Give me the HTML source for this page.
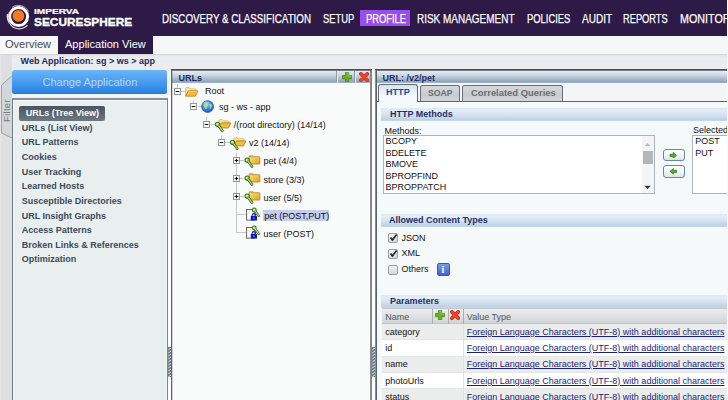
<!DOCTYPE html>
<html>
<head>
<meta charset="utf-8">
<title>SecureSphere</title>
<style>
*{box-sizing:border-box;margin:0;padding:0}
html,body{width:728px;height:400px;overflow:hidden;background:#f3f4f5;font-family:"Liberation Sans",Arial,sans-serif;font-size:9px;color:#111}
.a{position:absolute}
.t{position:absolute;white-space:nowrap;line-height:10px;height:10px;font-size:9px;transform-origin:0 0}
.b{font-weight:bold}
#hdr{position:absolute;left:0;top:0;width:728px;height:35.6px;background:#2e1a47}
.nav{position:absolute;top:12px;height:15px;line-height:15px;font-size:12.5px;color:#fff;-webkit-text-stroke:0.25px #fff;white-space:nowrap;transform-origin:0 0}
#tabs{position:absolute;left:0;top:35.6px;width:728px;height:19.4px;background:#f5f6f6;border-bottom:1px solid #d2d5d7}
.tb{position:absolute;top:0;height:18.6px}
.tb span{position:absolute;top:1.1px;line-height:14px;font-size:11.5px;white-space:nowrap;transform-origin:0 0;transform:scaleX(.96)}
#strip{position:absolute;left:0;top:55px;width:12px;height:345px;background:linear-gradient(90deg,#e6e7e8,#dcdedf 2px,#dcdedf 9px,#dfe2e6)}
#crow{position:absolute;left:0;top:55px;width:728px;height:14.5px;background:linear-gradient(#e4e6e7,#ebeced 3px)}
#chg{position:absolute;left:12px;top:69.5px;width:155px;height:24.5px;border-radius:2.5px;background:linear-gradient(#6ab6f6,#4a9df0 45%,#2f86e4 90%,#2a78d0);}
#chg span{position:absolute;left:30.5px;top:6px;color:#b4d8fa;font-size:11px;line-height:13px;white-space:nowrap}
#menu{position:absolute;left:12px;top:98px;width:156px;height:310px;background:#e9efef;border:1px solid #7d838a;border-left:1px solid #747a81;border-top:2px solid #8a9096;box-shadow:inset 0 0 0 1px #f2f5f6,inset -1px 0 0 0 #b5babe}
.mi{position:absolute;left:21.75px;color:#3b4a5b;font-weight:bold}
.ph{position:absolute;top:71px;height:12px;background:linear-gradient(#e4ecf3 0%,#cbd8e4 35%,#a9bccf 65%,#8fa7c0 88%,#a3b7cb 100%);}
.sec{position:absolute;left:381px;width:347px;height:13px;background:linear-gradient(#dfe9f4 0%,#e3edf7 20%,#d3e1f0 55%,#bdd1e7 90%,#c8d9eb 100%)}
.sec span{position:absolute;left:9px;top:1.1px;color:#1f2f63;font-weight:bold;font-size:9px;line-height:10px;white-space:nowrap}
.lb{position:absolute;background:#fff;border:1px solid #aeb4b9}
.cb{position:absolute;left:388px;width:10px;height:10px;border:1px solid #9a9fa4;border-radius:2px;background:linear-gradient(#f4f4f4,#d4d6d8)}
.rw{position:absolute;left:382px;width:346px;height:16.25px}
.lnk{color:#1b2479;text-decoration:underline}
</style>
</head>
<body>

<div id="hdr">
<svg class="a" style="left:4px;top:2px" width="30" height="30" viewBox="0 0 30 30"><circle cx="14.6" cy="14.6" r="9" fill="none" stroke="#fff" stroke-width="3"/><path d="M5.2 20.5A11.2 11.2 0 0 0 23.5 23.2" fill="none" stroke="#fff" stroke-width="1.1" opacity=".85"/><path d="M24.6 9.6A11.2 11.2 0 0 0 8 5.4" fill="none" stroke="#fff" stroke-width=".9" opacity=".7"/><path d="M3.6 12A11.3 11.3 0 0 0 5.2 20.5" fill="none" stroke="#fff" stroke-width="1.4" opacity=".9"/><circle cx="14.4" cy="13.9" r="5.9" fill="#f47920"/></svg>
<div class="t b" style="left:34.3px;top:8.4px;font-size:7px;line-height:8px;height:8px;color:#fff;-webkit-text-stroke:0.2px #fff;transform:scaleX(1.44)">IMPERVA</div>
<div class="t b" style="left:34px;top:15.7px;font-size:11.2px;line-height:12px;height:12px;color:#fff;-webkit-text-stroke:0.35px #fff;transform:scaleX(1.06)">SECURESPHERE</div>
<div class="a" style="left:360px;top:9.5px;width:50px;height:16.5px;background:#9a4cee"></div>
<div class="nav" style="left:162px;transform:scaleX(0.7829)">DISCOVERY &amp; CLASSIFICATION</div>
<div class="nav" style="left:323px;transform:scaleX(0.7496)">SETUP</div>
<div class="nav" style="left:365.5px;transform:scaleX(0.7477)">PROFILE</div>
<div class="nav" style="left:417px;transform:scaleX(0.7975)">RISK MANAGEMENT</div>
<div class="nav" style="left:526.6px;transform:scaleX(0.7526)">POLICIES</div>
<div class="nav" style="left:581.5px;transform:scaleX(0.8027)">AUDIT</div>
<div class="nav" style="left:623.3px;transform:scaleX(0.7425)">REPORTS</div>
<div class="nav" style="left:679.5px;transform:scaleX(0.8588)">MONITOR</div>
</div>
<div id="tabs">
<div class="tb" style="left:0;width:58px;background:#f7f7f7"><span style="left:5px;color:#4b4b4b">Overview</span></div>
<div class="tb" style="left:58px;width:95px;background:#2e1a47"><span style="left:7px;color:#fff">Application View</span></div>
</div>
<div id="crow"></div>
<div id="strip"></div>
<svg class="a" style="left:0;top:70px" width="13" height="72" viewBox="0 0 13 72"><path d="M12 6 L1.5 15 L1.5 63 L12 68" fill="#d3d7da" stroke="#9da3a8" stroke-width="1"/></svg>
<div class="t" style="left:2px;top:122px;color:#727980;font-size:9.5px;transform:rotate(-90deg);letter-spacing:0.3px">Filter</div>
<div class="t b" style="left:20.6px;top:55.5px;color:#1f2a5e">Web Application: sg &gt; ws &gt; app</div>
<div id="chg"><span>Change Application</span></div>
<div id="menu"></div>
<div class="a" style="left:18.75px;top:105.5px;width:86.5px;height:15px;border-radius:2px;background:linear-gradient(#4a5560,#5a6570 50%,#6e7984)"></div>
<div class="t mi" style="top:108.15px;left:25.75px;color:#fff;">URLs (Tree View)</div>
<div class="t mi" style="top:122.90px;">URLs (List View)</div>
<div class="t mi" style="top:137.40px;">URL Patterns</div>
<div class="t mi" style="top:151.90px;">Cookies</div>
<div class="t mi" style="top:166.90px;">User Tracking</div>
<div class="t mi" style="top:181.40px;">Learned Hosts</div>
<div class="t mi" style="top:196.15px;">Susceptible Directories</div>
<div class="t mi" style="top:210.65px;">URL Insight Graphs</div>
<div class="t mi" style="top:225.15px;">Access Patterns</div>
<div class="t mi" style="top:239.90px;">Broken Links &amp; References</div>
<div class="t mi" style="top:254.40px;">Optimization</div>
<div class="a" style="left:171px;top:69px;width:201px;height:340px;background:#f9fbfb"></div>
<div class="ph" style="left:172px;width:198px"></div>
<div class="a" style="left:171px;top:69px;width:1px;height:331px;background:rgba(64,70,78,0.85)"></div>
<div class="a" style="left:172px;top:70px;width:1px;height:330px;background:rgba(64,70,78,0.22)"></div>
<div class="a" style="left:370px;top:70px;width:1px;height:330px;background:rgba(64,70,78,0.6)"></div>
<div class="a" style="left:371px;top:69px;width:1px;height:331px;background:rgba(64,70,78,0.65)"></div>
<div class="a" style="left:171px;top:69px;width:201px;height:1px;background:rgba(64,70,78,0.95)"></div>
<div class="a" style="left:172px;top:70px;width:199px;height:1px;background:rgba(64,70,78,0.7)"></div>
<div class="t b" style="left:178.5px;top:72.7px;color:#1f2f63">URLs</div>
<div class="a" style="left:337px;top:70.5px;width:1px;height:12px;background:#e9eef3;box-shadow:-1px 0 0 #8d9aa8"></div>
<div class="a" style="left:354.5px;top:70.5px;width:1px;height:12px;background:#e9eef3;box-shadow:-1px 0 0 #8d9aa8"></div>
<svg class="a" style="left:341.7px;top:71.9px" width="10.2" height="10.2" viewBox="0 0 10 10"><path d="M3.4 0.4h3.2v3h3v3.2h-3v3H3.4v-3h-3V3.4h3z" fill="#6bb023" stroke="#3f7d12" stroke-width=".7"/><path d="M4 1h2v3h3" fill="none" stroke="#a5d86a" stroke-width=".6"/></svg>
<svg class="a" style="left:358.5px;top:72.3px" width="10.2" height="10.2" viewBox="0 0 10 10"><path d="M1.9 1.9L8.1 8.1M8.1 1.9L1.9 8.1" stroke="#c42c14" stroke-width="3.7" stroke-linecap="round"/><path d="M1.9 1.9L8.1 8.1M8.1 1.9L1.9 8.1" stroke="#e8452c" stroke-width="2.5" stroke-linecap="round"/></svg>
<div class="a" style="left:177.00px;top:84px;width:1px;height:4.00px;background:#c4c7ca"></div>
<div class="a" style="left:181px;top:91.10px;width:4.00px;height:1px;background:#c4c7ca"></div>
<div class="a" style="left:193.40px;top:99.5px;width:1px;height:3.50px;background:#c4c7ca"></div>
<div class="a" style="left:197.5px;top:105.80px;width:4.20px;height:1px;background:#c4c7ca"></div>
<div class="a" style="left:206.10px;top:116.5px;width:1px;height:4.50px;background:#c4c7ca"></div>
<div class="a" style="left:210px;top:124.00px;width:4.50px;height:1px;background:#c4c7ca"></div>
<div class="a" style="left:221.10px;top:135px;width:1px;height:4.30px;background:#c4c7ca"></div>
<div class="a" style="left:225px;top:142.10px;width:4.50px;height:1px;background:#c4c7ca"></div>
<div class="a" style="left:236.00px;top:153px;width:1px;height:79.50px;background:#c4c7ca"></div>
<div class="a" style="left:240px;top:159.80px;width:4.00px;height:1px;background:#c4c7ca"></div>
<div class="a" style="left:240px;top:178.10px;width:4.00px;height:1px;background:#c4c7ca"></div>
<div class="a" style="left:240px;top:196.10px;width:4.00px;height:1px;background:#c4c7ca"></div>
<div class="a" style="left:236.5px;top:213.70px;width:9.30px;height:1px;background:#c4c7ca"></div>
<div class="a" style="left:236.5px;top:232.00px;width:9.30px;height:1px;background:#c4c7ca"></div>
<svg class="a" style="left:173.90px;top:88.10px" width="7" height="7" viewBox="0 0 7 7"><rect x="0.5" y="0.5" width="6" height="6" fill="#fff" stroke="#94989c" stroke-width="1"/><path d="M1.7 3.5H5.3" stroke="#111" stroke-width="1.1"/></svg>
<svg class="a" style="left:185px;top:87px" width="13.4" height="9.8" viewBox="0 0 13.4 9.8"><path d="M0.6 8.8V1.6q0-.9 1-.9h2.6l1 1.2h5.2q.9 0 .9.9v1.2H3.4L0.6 8.8z" fill="#fbe9a4" stroke="#c9982a" stroke-width=".6"/><path d="M3.2 3.9h9.8l-2.6 5.3H0.7z" fill="#f2bd35" stroke="#a8761a" stroke-width=".7"/><path d="M3.6 4.5h8.4" stroke="#fbe08a" stroke-width=".7"/></svg>
<div class="t" style="left:205px;top:86.4px">Root</div>
<svg class="a" style="left:190.40px;top:102.80px" width="7" height="7" viewBox="0 0 7 7"><rect x="0.5" y="0.5" width="6" height="6" fill="#fff" stroke="#94989c" stroke-width="1"/><path d="M1.7 3.5H5.3" stroke="#111" stroke-width="1.1"/></svg>
<svg class="a" style="left:201.30px;top:99.70px" width="13.2" height="13.2" viewBox="0 0 13.2 13.2"><defs><radialGradient id="gg" cx=".4" cy=".3" r=".75"><stop offset="0" stop-color="#d4e6ff"/><stop offset=".45" stop-color="#4a8af0"/><stop offset="1" stop-color="#1f4cc0"/></radialGradient></defs><circle cx="6.6" cy="6.6" r="6" fill="url(#gg)" stroke="#2448a8" stroke-width=".6"/><path d="M3.2 3.2q1.8-1.4 3-.6l-.6 1.6 1.2 1-1.4 1.6.4 2.2-1.6-.6-1.2-2.2z" fill="#a4e87c"/><path d="M8.2 4.4l2-.6.9 2.2-1.2 2.6-1.4.4.4-2.2z" fill="#98e070"/></svg>
<div class="t" style="left:219px;top:102.4px">sg - ws - app</div>
<svg class="a" style="left:203.10px;top:121.00px" width="7" height="7" viewBox="0 0 7 7"><rect x="0.5" y="0.5" width="6" height="6" fill="#fff" stroke="#94989c" stroke-width="1"/><path d="M1.7 3.5H5.3" stroke="#111" stroke-width="1.1"/></svg>
<svg class="a" style="left:214px;top:119.2px" width="17.5" height="12.5" viewBox="0 0 17.5 12.5"><g transform="translate(4.2,0)"><path d="M0.6 8.6V1.6q0-.9 1-.9h2.4l1 1.2h5q.9 0 .9.9v1.2H3.4L0.6 8.6z" fill="#fbe9a4" stroke="#c9982a" stroke-width=".6"/><path d="M3.1 3.9h9.6l-2.5 5.1H0.7z" fill="#f2bd35" stroke="#a8761a" stroke-width=".7"/></g><g transform="translate(0.6,2.4)"><g><circle cx="2.9" cy="2.9" r="2.6" fill="#2c5f16"/><path d="M4.3 4.6L7.7 9.3" stroke="#2c5f16" stroke-width="2.7" stroke-linecap="round"/><circle cx="2.9" cy="2.9" r="1.75" fill="#9ad162"/><path d="M4.2 4.5L7.7 9.3" stroke="#b5e283" stroke-width="1.2" stroke-linecap="round"/><circle cx="2.6" cy="2.6" r=".85" fill="#f3faea"/></g></g></svg>
<div class="t" style="left:233.8px;top:120.4px">/(root directory) (14/14)</div>
<svg class="a" style="left:218.10px;top:139.10px" width="7" height="7" viewBox="0 0 7 7"><rect x="0.5" y="0.5" width="6" height="6" fill="#fff" stroke="#94989c" stroke-width="1"/><path d="M1.7 3.5H5.3" stroke="#111" stroke-width="1.1"/></svg>
<svg class="a" style="left:229px;top:137.3px" width="17.5" height="12.5" viewBox="0 0 17.5 12.5"><g transform="translate(4.2,0)"><path d="M0.6 8.6V1.6q0-.9 1-.9h2.4l1 1.2h5q.9 0 .9.9v1.2H3.4L0.6 8.6z" fill="#fbe9a4" stroke="#c9982a" stroke-width=".6"/><path d="M3.1 3.9h9.6l-2.5 5.1H0.7z" fill="#f2bd35" stroke="#a8761a" stroke-width=".7"/></g><g transform="translate(0.6,2.4)"><g><circle cx="2.9" cy="2.9" r="2.6" fill="#2c5f16"/><path d="M4.3 4.6L7.7 9.3" stroke="#2c5f16" stroke-width="2.7" stroke-linecap="round"/><circle cx="2.9" cy="2.9" r="1.75" fill="#9ad162"/><path d="M4.2 4.5L7.7 9.3" stroke="#b5e283" stroke-width="1.2" stroke-linecap="round"/><circle cx="2.6" cy="2.6" r=".85" fill="#f3faea"/></g></g></svg>
<div class="t" style="left:249px;top:138.4px">v2 (14/14)</div>
<svg class="a" style="left:233.00px;top:156.80px" width="7" height="7" viewBox="0 0 7 7"><rect x="0.5" y="0.5" width="6" height="6" fill="#fff" stroke="#94989c" stroke-width="1"/><path d="M1.7 3.5H5.3 M3.5 1.7V5.3" stroke="#111" stroke-width="1.1"/></svg>
<svg class="a" style="left:243.6px;top:155.10000000000002px" width="17.5" height="12.5" viewBox="0 0 17.5 12.5"><defs><linearGradient id="fg" x1="0" y1="0" x2="1" y2="1"><stop offset="0" stop-color="#fde27a"/><stop offset="1" stop-color="#e2a21e"/></linearGradient></defs><g transform="translate(4.4,0)"><path d="M0.5 2V1.3q0-.8.9-.8h3.2l.9 1.1" fill="#f8e396" stroke="#c49a35" stroke-width=".6"/><rect x=".5" y="1.7" width="11" height="7.4" rx=".8" fill="url(#fg)" stroke="#a87a1c" stroke-width=".7"/></g><g transform="translate(0.2,2.2)"><g><circle cx="2.9" cy="2.9" r="2.6" fill="#2c5f16"/><path d="M4.3 4.6L7.7 9.3" stroke="#2c5f16" stroke-width="2.7" stroke-linecap="round"/><circle cx="2.9" cy="2.9" r="1.75" fill="#9ad162"/><path d="M4.2 4.5L7.7 9.3" stroke="#b5e283" stroke-width="1.2" stroke-linecap="round"/><circle cx="2.6" cy="2.6" r=".85" fill="#f3faea"/></g></g></svg>
<div class="t" style="left:263.6px;top:156.40px">pet (4/4)</div>
<svg class="a" style="left:233.00px;top:175.10px" width="7" height="7" viewBox="0 0 7 7"><rect x="0.5" y="0.5" width="6" height="6" fill="#fff" stroke="#94989c" stroke-width="1"/><path d="M1.7 3.5H5.3 M3.5 1.7V5.3" stroke="#111" stroke-width="1.1"/></svg>
<svg class="a" style="left:243.6px;top:173.4px" width="17.5" height="12.5" viewBox="0 0 17.5 12.5"><defs><linearGradient id="fg" x1="0" y1="0" x2="1" y2="1"><stop offset="0" stop-color="#fde27a"/><stop offset="1" stop-color="#e2a21e"/></linearGradient></defs><g transform="translate(4.4,0)"><path d="M0.5 2V1.3q0-.8.9-.8h3.2l.9 1.1" fill="#f8e396" stroke="#c49a35" stroke-width=".6"/><rect x=".5" y="1.7" width="11" height="7.4" rx=".8" fill="url(#fg)" stroke="#a87a1c" stroke-width=".7"/></g><g transform="translate(0.2,2.2)"><g><circle cx="2.9" cy="2.9" r="2.6" fill="#2c5f16"/><path d="M4.3 4.6L7.7 9.3" stroke="#2c5f16" stroke-width="2.7" stroke-linecap="round"/><circle cx="2.9" cy="2.9" r="1.75" fill="#9ad162"/><path d="M4.2 4.5L7.7 9.3" stroke="#b5e283" stroke-width="1.2" stroke-linecap="round"/><circle cx="2.6" cy="2.6" r=".85" fill="#f3faea"/></g></g></svg>
<div class="t" style="left:263.6px;top:174.70px">store (3/3)</div>
<svg class="a" style="left:233.00px;top:193.10px" width="7" height="7" viewBox="0 0 7 7"><rect x="0.5" y="0.5" width="6" height="6" fill="#fff" stroke="#94989c" stroke-width="1"/><path d="M1.7 3.5H5.3 M3.5 1.7V5.3" stroke="#111" stroke-width="1.1"/></svg>
<svg class="a" style="left:243.6px;top:191.4px" width="17.5" height="12.5" viewBox="0 0 17.5 12.5"><defs><linearGradient id="fg" x1="0" y1="0" x2="1" y2="1"><stop offset="0" stop-color="#fde27a"/><stop offset="1" stop-color="#e2a21e"/></linearGradient></defs><g transform="translate(4.4,0)"><path d="M0.5 2V1.3q0-.8.9-.8h3.2l.9 1.1" fill="#f8e396" stroke="#c49a35" stroke-width=".6"/><rect x=".5" y="1.7" width="11" height="7.4" rx=".8" fill="url(#fg)" stroke="#a87a1c" stroke-width=".7"/></g><g transform="translate(0.2,2.2)"><g><circle cx="2.9" cy="2.9" r="2.6" fill="#2c5f16"/><path d="M4.3 4.6L7.7 9.3" stroke="#2c5f16" stroke-width="2.7" stroke-linecap="round"/><circle cx="2.9" cy="2.9" r="1.75" fill="#9ad162"/><path d="M4.2 4.5L7.7 9.3" stroke="#b5e283" stroke-width="1.2" stroke-linecap="round"/><circle cx="2.6" cy="2.6" r=".85" fill="#f3faea"/></g></g></svg>
<div class="t" style="left:263.6px;top:192.70px">user (5/5)</div>
<div class="a" style="left:262.8px;top:210px;width:66.4px;height:11px;background:#c6cef0"></div>
<svg class="a" style="left:245.2px;top:207px" width="16" height="14" viewBox="0 0 16 14"><rect x="1.6" y="2.5" width="7.6" height="10.6" fill="#fffdf4" stroke="#4e5357" stroke-width=".9"/><g transform="translate(6.6,0.3) scale(.92)"><g><circle cx="2.9" cy="2.9" r="2.6" fill="#2c5f16"/><path d="M4.3 4.6L7.7 9.3" stroke="#2c5f16" stroke-width="2.7" stroke-linecap="round"/><circle cx="2.9" cy="2.9" r="1.75" fill="#9ad162"/><path d="M4.2 4.5L7.7 9.3" stroke="#b5e283" stroke-width="1.2" stroke-linecap="round"/><circle cx="2.6" cy="2.6" r=".85" fill="#f3faea"/></g></g><path d="M7.1 9.3V8.4a1.8 1.8 0 013.6 0v.9" fill="none" stroke="#1a22c8" stroke-width="1.1"/><rect x="5.8" y="9.1" width="6.2" height="4.4" rx=".5" fill="#1212c4"/><rect x="8.5" y="10.3" width=".9" height="1.8" fill="#9fb0ff"/></svg>
<div class="t" style="left:264.2px;top:210.6px">pet (POST,PUT)</div>
<svg class="a" style="left:245.2px;top:225px" width="16" height="14" viewBox="0 0 16 14"><rect x="1.6" y="2.5" width="7.6" height="10.6" fill="#fffdf4" stroke="#4e5357" stroke-width=".9"/><g transform="translate(6.6,0.3) scale(.92)"><g><circle cx="2.9" cy="2.9" r="2.6" fill="#2c5f16"/><path d="M4.3 4.6L7.7 9.3" stroke="#2c5f16" stroke-width="2.7" stroke-linecap="round"/><circle cx="2.9" cy="2.9" r="1.75" fill="#9ad162"/><path d="M4.2 4.5L7.7 9.3" stroke="#b5e283" stroke-width="1.2" stroke-linecap="round"/><circle cx="2.6" cy="2.6" r=".85" fill="#f3faea"/></g></g><path d="M7.1 9.3V8.4a1.8 1.8 0 013.6 0v.9" fill="none" stroke="#1a22c8" stroke-width="1.1"/><rect x="5.8" y="9.1" width="6.2" height="4.4" rx=".5" fill="#1212c4"/><rect x="8.5" y="10.3" width=".9" height="1.8" fill="#9fb0ff"/></svg>
<div class="t" style="left:263.6px;top:228.9px">user (POST)</div>
<div class="a" style="left:168px;top:95px;width:3px;height:305px;background:#fcfdfd"></div>
<div class="a" style="left:372.4px;top:84px;width:3.1px;height:316px;background:#fcfdfd"></div>
<svg class="a" style="left:167.6px;top:347px" width="3.6" height="30" viewBox="0 0 3.6 30"><rect x="0" y="0" width="3.6" height="30" fill="#707983"/><path d="M0.3 2.9L3.3000000000000003 0.9" stroke="#e8ecef" stroke-width=".95"/><path d="M0.3 5.9L3.3000000000000003 3.9" stroke="#e8ecef" stroke-width=".95"/><path d="M0.3 8.9L3.3000000000000003 6.9" stroke="#e8ecef" stroke-width=".95"/><path d="M0.3 11.9L3.3000000000000003 9.9" stroke="#e8ecef" stroke-width=".95"/><path d="M0.3 14.9L3.3000000000000003 12.9" stroke="#e8ecef" stroke-width=".95"/><path d="M0.3 17.9L3.3000000000000003 15.9" stroke="#e8ecef" stroke-width=".95"/><path d="M0.3 20.9L3.3000000000000003 18.9" stroke="#e8ecef" stroke-width=".95"/><path d="M0.3 23.9L3.3000000000000003 21.9" stroke="#e8ecef" stroke-width=".95"/><path d="M0.3 26.9L3.3000000000000003 24.9" stroke="#e8ecef" stroke-width=".95"/><path d="M0.3 29.9L3.3000000000000003 27.9" stroke="#e8ecef" stroke-width=".95"/></svg>
<svg class="a" style="left:372.2px;top:347px" width="3.4" height="30" viewBox="0 0 3.4 30"><rect x="0" y="0" width="3.4" height="30" fill="#707983"/><path d="M0.3 2.9L3.1 0.9" stroke="#e8ecef" stroke-width=".95"/><path d="M0.3 5.9L3.1 3.9" stroke="#e8ecef" stroke-width=".95"/><path d="M0.3 8.9L3.1 6.9" stroke="#e8ecef" stroke-width=".95"/><path d="M0.3 11.9L3.1 9.9" stroke="#e8ecef" stroke-width=".95"/><path d="M0.3 14.9L3.1 12.9" stroke="#e8ecef" stroke-width=".95"/><path d="M0.3 17.9L3.1 15.9" stroke="#e8ecef" stroke-width=".95"/><path d="M0.3 20.9L3.1 18.9" stroke="#e8ecef" stroke-width=".95"/><path d="M0.3 23.9L3.1 21.9" stroke="#e8ecef" stroke-width=".95"/><path d="M0.3 26.9L3.1 24.9" stroke="#e8ecef" stroke-width=".95"/><path d="M0.3 29.9L3.1 27.9" stroke="#e8ecef" stroke-width=".95"/></svg>
<div class="a" style="left:375px;top:69px;width:360px;height:340px;background:#f6f9fa"></div>
<div class="ph" style="left:377px;width:351px"></div>
<div class="a" style="left:375px;top:69px;width:1px;height:331px;background:rgba(64,70,78,0.6)"></div>
<div class="a" style="left:376px;top:69px;width:1px;height:331px;background:rgba(64,70,78,0.85)"></div>
<div class="a" style="left:375px;top:69px;width:353px;height:1px;background:rgba(64,70,78,0.95)"></div>
<div class="a" style="left:377px;top:70px;width:351px;height:1px;background:rgba(64,70,78,0.7)"></div>
<div class="t b" style="left:382.5px;top:72.9px;color:#1f2f63">URL: /v2/pet</div>
<div class="a" style="left:377px;top:83px;width:351px;height:18.8px;background:#f3f5f6;border-bottom:1px solid #62686e"></div>
<div class="a" style="left:419.5px;top:85px;width:40.5px;height:16px;border:1.3px solid #6a7076;border-bottom:none;border-radius:2.5px 2.5px 0 0;background:linear-gradient(#d6d9dc,#c9cccf 60%,#d3d6d9)"></div>
<div class="a" style="left:462px;top:85px;width:101px;height:16px;border:1.3px solid #6a7076;border-bottom:none;border-radius:2.5px 2.5px 0 0;background:linear-gradient(#d6d9dc,#c9cccf 60%,#d3d6d9)"></div>
<div class="a" style="left:378px;top:84px;width:40px;height:18px;border:1.3px solid #666c72;border-bottom:none;border-radius:3px 3px 0 0;background:linear-gradient(#d5e4f5,#f6f9fa 70%)"></div>
<div class="t b" style="left:386.1px;top:87.4px;color:#1c4a9c;transform:scaleX(1.01)">HTTP</div>
<div class="t b" style="left:427.5px;top:87.6px;color:#686e74;transform:scaleX(.96)">SOAP</div>
<div class="t b" style="left:470.75px;top:87.6px;color:#686e74;transform:scaleX(1.046)">Correlated Queries</div>
<div class="sec" style="top:108px"><span>HTTP Methods</span></div>
<div class="t" style="left:384.4px;top:125.65px">Methods:</div>
<div class="lb" style="left:382.6px;top:135.3px;width:272.6px;height:59.2px"></div>
<div class="t" style="left:385.6px;top:136.30px">BCOPY</div>
<div class="t" style="left:385.6px;top:147.75px">BDELETE</div>
<div class="t" style="left:385.6px;top:159.20px">BMOVE</div>
<div class="t" style="left:385.6px;top:170.65px">BPROPFIND</div>
<div class="t" style="left:385.6px;top:182.10px">BPROPPATCH</div>
<div class="a" style="left:642px;top:136.3px;width:12.2px;height:57.2px;background:#f4f5f6"></div>
<div class="a" style="left:643px;top:150.5px;width:9.8px;height:13.3px;background:#b4b6b8"></div>
<svg class="a" style="left:644px;top:141.5px" width="7" height="5" viewBox="0 0 7 5"><path d="M0.5 4L3.5 1L6.5 4z" fill="#b9bcbf"/></svg>
<svg class="a" style="left:644px;top:184.5px" width="7" height="5" viewBox="0 0 7 5"><path d="M0.3 0.8L3.5 4.2L6.7 0.8z" fill="#3a3d40"/></svg>
<div class="a" style="left:663px;top:148.8px;width:21.8px;height:12.5px;border:1.5px solid #6a879f;border-radius:3px;background:linear-gradient(#ffffff,#f3f5f7 50%,#dfe4e8)"></div><svg class="a" style="left:669.2px;top:151.70000000000002px" width="8.6" height="6.8" viewBox="0 0 8.6 6.8"><path d="M1 2.3h3.2V0.6L7.6 3.4L4.2 6.2V4.5H1z" fill="#58b030" stroke="#2f7d18" stroke-width=".8"/></svg>
<div class="a" style="left:663px;top:165px;width:21.8px;height:12.5px;border:1.5px solid #6a879f;border-radius:3px;background:linear-gradient(#ffffff,#f3f5f7 50%,#dfe4e8)"></div><svg class="a" style="left:669.2px;top:167.9px" width="8.6" height="6.8" viewBox="0 0 8.6 6.8"><path d="M7.6 2.3H4.4V0.6L1 3.4L4.4 6.2V4.5h3.2z" fill="#58b030" stroke="#2f7d18" stroke-width=".8"/></svg>
<div class="t" style="left:693px;top:125.0px">Selected</div>
<div class="lb" style="left:692.2px;top:135.3px;width:50px;height:59.2px"></div>
<div class="t" style="left:695.3px;top:136.4px">POST</div>
<div class="t" style="left:695.3px;top:147.7px">PUT</div>
<div class="sec" style="top:214px"><span style="left:8px">Allowed Content Types</span></div>
<div class="cb" style="top:233px"></div><svg class="a" style="left:389.2px;top:233.2px" width="9" height="9" viewBox="0 0 9 9"><path d="M1.5 4.6L3.5 6.8L7.6 1.4" fill="none" stroke="#2a2a2a" stroke-width="1.7"/></svg>
<div class="t" style="left:401.5px;top:232.8px">JSON</div>
<div class="cb" style="top:248.6px"></div><svg class="a" style="left:389.2px;top:248.79999999999998px" width="9" height="9" viewBox="0 0 9 9"><path d="M1.5 4.6L3.5 6.8L7.6 1.4" fill="none" stroke="#2a2a2a" stroke-width="1.7"/></svg>
<div class="t" style="left:401.5px;top:248.4px">XML</div>
<div class="cb" style="top:264.5px"></div>
<div class="t" style="left:401.5px;top:263.9px">Others</div>
<div class="a" style="left:437px;top:263px;width:13px;height:13px;border-radius:2px;background:linear-gradient(#7a9af0,#3f62cf);border:1px solid #3a55b5"></div>
<div class="t b" style="left:441.6px;top:264.6px;color:#fff;font-size:10px;font-family:'Liberation Serif',serif">i</div>
<div class="sec" style="top:295px"><span style="left:9px">Parameters</span></div>
<div class="a" style="left:382px;top:307.7px;width:346px;height:16.3px;background:linear-gradient(#eceeef,#dcdfe1 60%,#d0d4d7);border-top:1px solid #c4c9cd;border-bottom:1px solid #c0c5c9"></div>
<div class="t" style="left:385.2px;top:311.5px;color:#50565b">Name</div>
<div class="a" style="left:432px;top:308.5px;width:1px;height:15px;background:#aab0b5"></div>
<div class="a" style="left:448px;top:308.5px;width:1px;height:15px;background:#aab0b5"></div>
<div class="a" style="left:463px;top:308.5px;width:1px;height:15px;background:#aab0b5"></div>
<svg class="a" style="left:434.6px;top:310.2px" width="10.2" height="10.2" viewBox="0 0 10 10"><path d="M3.4 0.4h3.2v3h3v3.2h-3v3H3.4v-3h-3V3.4h3z" fill="#6bb023" stroke="#3f7d12" stroke-width=".7"/><path d="M4 1h2v3h3" fill="none" stroke="#a5d86a" stroke-width=".6"/></svg>
<svg class="a" style="left:449.9px;top:310.4px" width="10.2" height="10.2" viewBox="0 0 10 10"><path d="M1.9 1.9L8.1 8.1M8.1 1.9L1.9 8.1" stroke="#c42c14" stroke-width="3.7" stroke-linecap="round"/><path d="M1.9 1.9L8.1 8.1M8.1 1.9L1.9 8.1" stroke="#e8452c" stroke-width="2.5" stroke-linecap="round"/></svg>
<div class="t" style="left:466.8px;top:311.5px;color:#50565b">Value Type</div>
<div class="rw" style="top:324.00px;background:#ebecec;border-bottom:1px solid #e3e5e7"></div>
<div class="a" style="left:463px;top:324.00px;width:1px;height:16.25px;background:#dfe2e4"></div>
<div class="t" style="left:385.2px;top:326.80px">category</div>
<div class="t lnk" style="left:466.8px;top:326.80px">Foreign Language Characters (UTF-8) with additional characters</div>
<div class="rw" style="top:340.25px;background:#ffffff;border-bottom:1px solid #e3e5e7"></div>
<div class="a" style="left:463px;top:340.25px;width:1px;height:16.25px;background:#dfe2e4"></div>
<div class="t" style="left:385.2px;top:343.05px">id</div>
<div class="t lnk" style="left:466.8px;top:343.05px">Foreign Language Characters (UTF-8) with additional characters</div>
<div class="rw" style="top:356.50px;background:#ebecec;border-bottom:1px solid #e3e5e7"></div>
<div class="a" style="left:463px;top:356.50px;width:1px;height:16.25px;background:#dfe2e4"></div>
<div class="t" style="left:385.2px;top:359.30px">name</div>
<div class="t lnk" style="left:466.8px;top:359.30px">Foreign Language Characters (UTF-8) with additional characters</div>
<div class="rw" style="top:372.75px;background:#ffffff;border-bottom:1px solid #e3e5e7"></div>
<div class="a" style="left:463px;top:372.75px;width:1px;height:16.25px;background:#dfe2e4"></div>
<div class="t" style="left:385.2px;top:375.55px">photoUrls</div>
<div class="t lnk" style="left:466.8px;top:375.55px">Foreign Language Characters (UTF-8) with additional characters</div>
<div class="rw" style="top:389.00px;background:#ebecec;border-bottom:1px solid #e3e5e7"></div>
<div class="a" style="left:463px;top:389.00px;width:1px;height:16.25px;background:#dfe2e4"></div>
<div class="t" style="left:385.2px;top:391.80px">status</div>
<div class="t lnk" style="left:466.8px;top:391.80px">Foreign Language Characters (UTF-8) with additional characters</div>
<div class="a" style="left:727px;top:0;width:1px;height:400px;background:#f6f7f8"></div>
</body>
</html>
